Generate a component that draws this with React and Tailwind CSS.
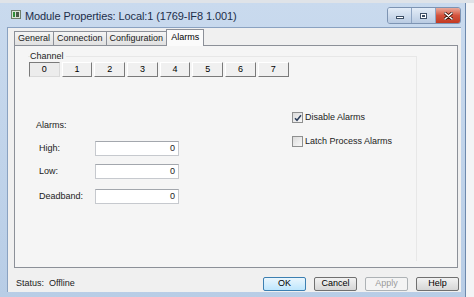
import React from "react";

const font = { fontFamily: '"Liberation Sans", Arial, sans-serif' };

const ModuleIcon = () => (
  <svg width="10" height="9" viewBox="0 0 10 9">
    <rect x="0.5" y="0.5" width="9" height="8" fill="#d9e2d6" stroke="#6f7f6a" />
    <rect x="2" y="2" width="2" height="5" fill="#2f8f3a" />
    <rect x="5" y="2" width="3" height="5" fill="#4a5a48" />
  </svg>
);

const CaptionButtons = () => (
  <div className="flex h-[17px] rounded-[3px] border border-[#7d94b3] overflow-hidden">
    <div className="w-[24px] flex items-center justify-center bg-gradient-to-b from-[#e3ecf7] to-[#b9cbe2] border-r border-[#8ea4c2]">
      <div className="w-[8px] h-[3px] bg-white border border-[#3d4f66] mt-[4px]" />
    </div>
    <div className="w-[24px] flex items-center justify-center bg-gradient-to-b from-[#e3ecf7] to-[#b9cbe2] border-r border-[#8ea4c2]">
      <div className="w-[7px] h-[6px] bg-white border border-[#3d4f66] flex items-center justify-center">
        <div className="w-[3px] h-[2px] bg-[#3d4f66]" />
      </div>
    </div>
    <div className="w-[24px] flex items-center justify-center bg-gradient-to-b from-[#e9a99b] via-[#d4533d] to-[#c23a22]">
      <svg width="9" height="8" viewBox="0 0 9 8">
        <path d="M1 1 L8 7 M8 1 L1 7" stroke="#3a1208" strokeWidth="3" strokeLinecap="round" />
        <path d="M1 1 L8 7 M8 1 L1 7" stroke="#ffffff" strokeWidth="1.6" strokeLinecap="round" />
      </svg>
    </div>
  </div>
);

const Tab = ({ label, active }) =>
  active ? (
    <div className="h-[17px] px-[4px] -mb-px bg-[#fbfbfb] border border-b-0 border-[#8c9098] flex items-center text-[9px] text-black z-10">
      {label}
    </div>
  ) : (
    <div className="h-[14px] mt-[2px] px-[3px] bg-gradient-to-b from-[#f4f4f4] to-[#e1e1e1] border border-b-0 border-[#8c9098] -mr-px flex items-center text-[9px] text-[#1a1a1a]">
      {label}
    </div>
  );

const ChannelButton = ({ n, active }) =>
  active ? (
    <div className="w-[30.7px] h-[15px] flex items-center justify-center text-[9px] bg-[#ececec] border-t border-l border-[#7a7a7a] border-b border-r border-b-[#d9d9d9] border-r-[#d9d9d9]">
      {n}
    </div>
  ) : (
    <div className="w-[30.7px] h-[15px] flex items-center justify-center text-[9px] bg-[#f0f0f0] border-t border-l border-white border-b border-r border-b-[#7a7a7a] border-r-[#7a7a7a]">
      {n}
    </div>
  );

const Field = ({ label, mt }) => (
  <div className={`flex items-center ${mt}`}>
    <div className="w-[59px] pl-[3px] text-[9px] text-[#222]">{label}</div>
    <div className="w-[84px] h-[15px] bg-white border border-[#c6c9ce] border-t-[#a3a7ad] flex items-center justify-end pr-[3px] text-[9px] text-[#222]">
      0
    </div>
  </div>
);

const Check = ({ label, checked, mt }) => (
  <div className={`flex items-center ${mt}`}>
    <div className="w-[11px] h-[11px] border border-[#8e8f8f] bg-gradient-to-br from-[#dcdcdc] to-[#f8f8f8] flex items-center justify-center">
      {checked && (
        <svg width="8" height="8" viewBox="0 0 8 8">
          <path d="M1 4.2 L3 6.3 L7 1.3" fill="none" stroke="#2b3d5a" strokeWidth="1.5" />
        </svg>
      )}
    </div>
    <span className="ml-[2px] text-[9px] text-[#222]">{label}</span>
  </div>
);

const DlgButton = ({ label, kind }) => {
  const styles = {
    def: "border-[#3c7fb1] bg-gradient-to-b from-[#eaf6fd] to-[#bee6fd] text-black",
    normal: "border-[#707070] bg-gradient-to-b from-[#f2f2f2] to-[#d6d6d6] text-black",
    off: "border-[#adb2b5] bg-[#f4f4f4] text-[#9a9a9a]",
  };
  return (
    <div className={`w-[43px] h-[14px] rounded-[2px] border flex items-center justify-center text-[9px] ${styles[kind]}`}>
      {label}
    </div>
  );
};

export default function App() {
  return (
    <div className="w-[474px] h-[297px] bg-[#f3f4f6] overflow-hidden" style={font}>
      <div className="h-[3px] bg-[#dfe3e8]" />
      <div className="w-[466px] h-[294px] flex flex-col bg-gradient-to-b from-[#c9daee] to-[#b8cde6] border-r border-[#6d89ad]">
        {/* title bar */}
        <div className="h-[24px] flex items-start shrink-0">
          <div className="ml-[11px] mt-[7px]">
            <ModuleIcon />
          </div>
          <div className="ml-[4px] mt-[5px] text-[11px] text-[#1d2e4a] tracking-[-0.1px]">
            Module Properties: Local:1 (1769-IF8 1.001)
          </div>
          <div className="ml-auto mr-[4px] mt-[4px]">
            <CaptionButtons />
          </div>
        </div>

        {/* client area */}
        <div className="ml-[7px] mr-[4px] flex-1 mb-[5px] bg-[#f0f0f0] border-l border-t border-[#8aa2c1] flex flex-col">
          <div className="flex items-end pl-[6px] mt-[1px]">
            <Tab label="General" />
            <Tab label="Connection" />
            <Tab label="Configuration" />
            <Tab label="Alarms" active />
          </div>

          <div className="ml-[6px] w-[444px] h-[223px] border border-[#8c9098] bg-[#f5f5f5] flex flex-col">
            <div className="ml-[13px] mt-[10px] w-[389px] h-[205px] border-t border-r border-[#e7e7e7] flex flex-col">
              <div className="-mt-[6px] ml-[2px] text-[9px] text-[#222] leading-[10px] bg-[#f5f5f5] w-fit pr-[2px]">
                Channel
              </div>
              <div className="ml-[1px] mt-[1px] flex gap-[2px]">
                {[0, 1, 2, 3, 4, 5, 6, 7].map((n) => (
                  <ChannelButton key={n} n={n} active={n === 0} />
                ))}
              </div>

              <div className="flex">
                <div className="ml-[8px] flex flex-col">
                  <div className="mt-[43px] text-[9px] text-[#222] leading-[11px]">Alarms:</div>
                  <Field label="High:" mt="mt-[10px]" />
                  <Field label="Low:" mt="mt-[8px]" />
                  <Field label="Deadband:" mt="mt-[10px]" />
                </div>
                <div className="ml-[113px] flex flex-col">
                  <Check label="Disable Alarms" checked mt="mt-[34px]" />
                  <Check label="Latch Process Alarms" mt="mt-[10px]" />
                </div>
              </div>
            </div>
          </div>

          <div className="flex items-center mt-[9px]">
            <div className="ml-[8px] text-[9px] text-[#222]">Status:&nbsp; Offline</div>
            <div className="ml-auto mr-[2px] flex gap-[8px]">
              <DlgButton label="OK" kind="def" />
              <DlgButton label="Cancel" kind="normal" />
              <DlgButton label="Apply" kind="off" />
              <DlgButton label="Help" kind="normal" />
            </div>
          </div>
        </div>
      </div>
    </div>
  );
}
